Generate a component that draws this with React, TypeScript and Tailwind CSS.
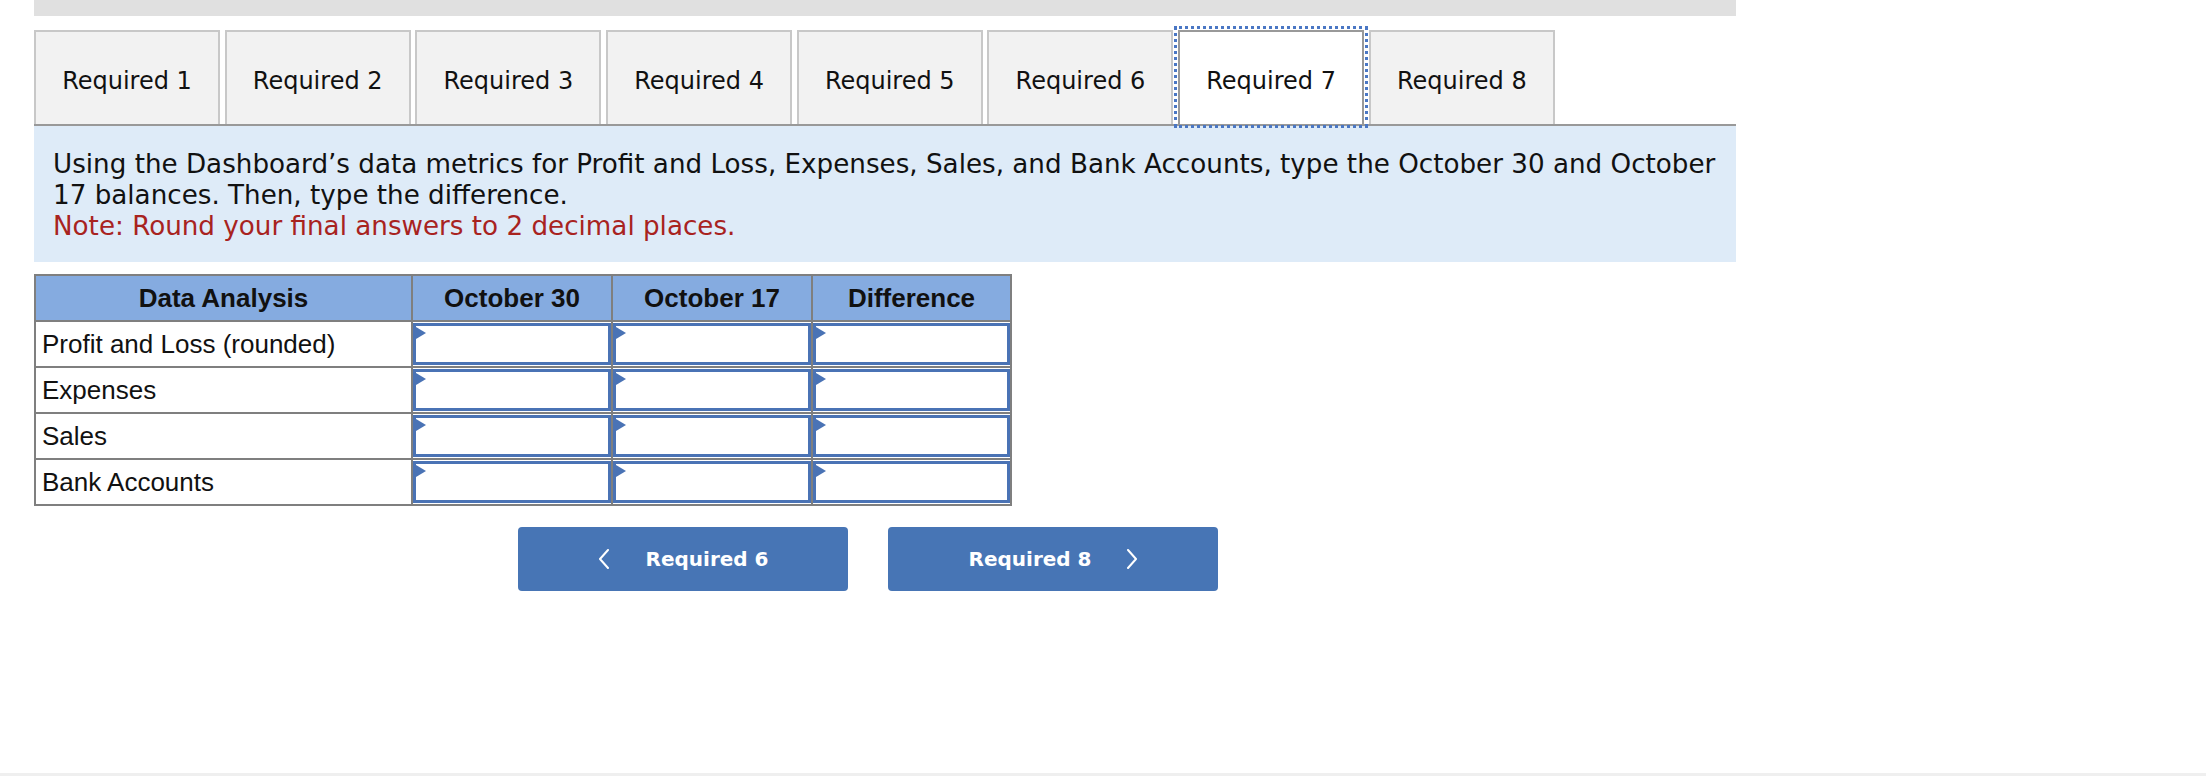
import React from 'react';

const tabs = [1, 2, 3, 4, 5, 6, 7, 8];
const rows = ['Profit and Loss (rounded)', 'Expenses', 'Sales', 'Bank Accounts'];
const cols = ['October 30', 'October 17', 'Difference'];

function InputCell() {
  return (
    <td className="h-[46px] border-2 border-[#7f7f7f] p-0">
      <div className="relative h-[42px] w-full border-[3px] border-[#4a73b5] bg-white">
        <svg className="absolute left-0 top-[1px]" width="10" height="12" viewBox="0 0 10 12">
          <polygon points="0,0 10,6 0,12" fill="#4a73b5" />
        </svg>
      </div>
    </td>
  );
}

function Chevron({ dir }: { dir: 'left' | 'right' }) {
  return (
    <svg width="12" height="20" viewBox="0 0 12 20" fill="none">
      <path
        d={dir === 'left' ? 'M10 1 L2 10 L10 19' : 'M2 1 L10 10 L2 19'}
        stroke="white"
        strokeWidth="2"
        strokeLinecap="round"
        strokeLinejoin="round"
      />
    </svg>
  );
}

export default function App() {
  return (
    <div className="flex h-[776px] flex-col bg-white">
      <div className="ml-[34px] h-[16px] w-[1702px] bg-[#e0e0e0]" />

      <div className="ml-[34px] mt-[14px] w-[1702px]">
        {/* tabs */}
        <div className="flex gap-[4.7px] border-b-2 border-[#999]">
          {tabs.map((n) => (
            <div
              key={n}
              className={
                n === 7
                  ? 'relative z-10 flex h-[94px] w-[186px] items-center justify-center border-2 border-b-0 border-[#999] bg-white pt-[6px] font-["DejaVu_Sans",sans-serif] text-[24px] text-[#111] outline-[3px] outline-offset-[1px] outline-dotted outline-[#4a77c4]'
                  : 'flex h-[94px] w-[186px] items-center justify-center border-2 border-b-0 border-[#c8c8c8] bg-[#f2f2f2] pt-[6px] font-["DejaVu_Sans",sans-serif] text-[24px] text-[#111]'
              }
            >
              Required {n}
            </div>
          ))}
        </div>

        {/* instructions */}
        <div className="h-[136px] bg-[#deebf8] pl-[19px] pt-[23px] font-['DejaVu_Sans',sans-serif] text-[26.2px] leading-[31px] whitespace-nowrap text-[#111]">
          <p>
            Using the Dashboard’s data metrics for Profit and Loss, Expenses, Sales, and Bank Accounts, type the October 30 and October
            <br />
            17 balances. Then, type the difference.
          </p>
          <p className="text-[#a8231f]">Note: Round your final answers to 2 decimal places.</p>
        </div>

        {/* table */}
        <table className="mt-[12px] w-[976px] table-fixed border-collapse font-['Liberation_Sans',Arial,sans-serif] text-[26px] text-[#111]">
          <colgroup>
            <col className="w-[377px]" />
            <col className="w-[200px]" />
            <col className="w-[200px]" />
            <col className="w-[199px]" />
          </colgroup>
          <thead>
            <tr>
              <th className="h-[46px] border-2 border-[#7f7f7f] bg-[#85abe0] p-0 text-center font-bold">Data Analysis</th>
              {cols.map((c) => (
                <th key={c} className="h-[46px] border-2 border-[#7f7f7f] bg-[#85abe0] p-0 text-center font-bold">
                  {c}
                </th>
              ))}
            </tr>
          </thead>
          <tbody>
            {rows.map((r) => (
              <tr key={r}>
                <td className="h-[46px] border-2 border-[#7f7f7f] px-[6px] py-0 text-left">{r}</td>
                <InputCell />
                <InputCell />
                <InputCell />
              </tr>
            ))}
          </tbody>
        </table>

        {/* navigation */}
        <div className="ml-[484px] mt-[21px] flex gap-[40px] font-['DejaVu_Sans',sans-serif] text-[20px] font-bold text-white">
          <button className="flex h-[64px] w-[330px] items-center justify-center gap-[36px] rounded-[4px] bg-[#4775b5]">
            <Chevron dir="left" />
            <span>Required 6</span>
          </button>
          <button className="flex h-[64px] w-[330px] items-center justify-center gap-[34px] rounded-[4px] bg-[#4775b5]">
            <span>Required 8</span>
            <Chevron dir="right" />
          </button>
        </div>
      </div>

      <div className="mt-auto h-[3px] w-full bg-[#efefef]" />
    </div>
  );
}
